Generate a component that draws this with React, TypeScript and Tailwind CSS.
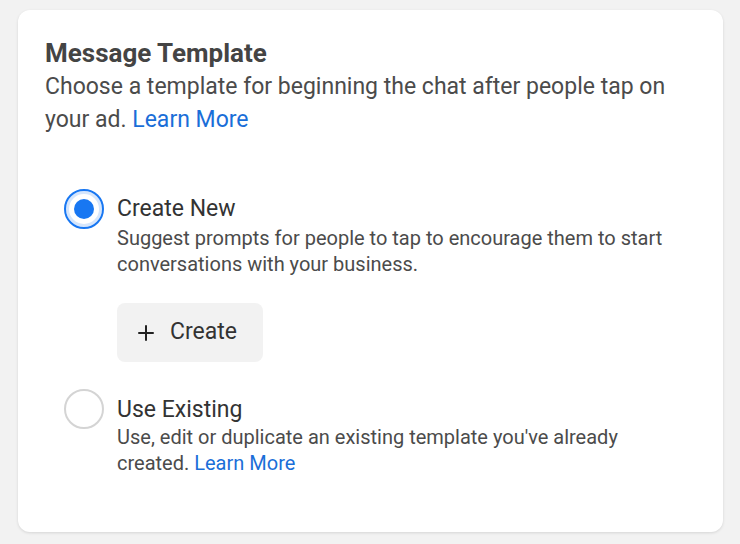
import { Plus } from 'lucide-react';

const Radio = ({ checked }: { checked: boolean }) =>
  checked ? (
    <div className="w-10 h-10 shrink-0 rounded-full border-2 border-[#1877f2] flex items-center justify-center shadow-[inset_0_0_0_3px_#d6e6fc]">
      <div className="w-5 h-5 rounded-full bg-[#1877f2]" />
    </div>
  ) : (
    <div className="w-10 h-10 shrink-0 rounded-full border-2 border-[#d4d4d4] bg-white" />
  );

const App = () => {
  return (
    <div className="w-[740px] h-[544px] bg-[#f2f2f2] pt-[10px] pl-[18px] font-['Roboto',sans-serif]">
      <div className="w-[705px] h-[522px] bg-white rounded-[12px] shadow-[0_1px_3px_rgba(0,0,0,0.12)] pl-[27px] pr-6 pt-[27px]">
        {/* Header */}
        <h1 className="text-[26px] leading-[32px] font-bold text-[#444444]">Message Template</h1>
        <p className="mt-[1px] text-[23px] leading-[33px] text-[#4b4b4b]">
          Choose a template for beginning the chat after people tap on your ad.{' '}
          <span className="text-[#1a6ed8]">Learn More</span>
        </p>

        {/* Options */}
        <div className="mt-[53px] pl-[19px] space-y-[27px]">
          <div className="flex items-start gap-[13px]">
            <Radio checked />
            <div className="pt-[6px]">
              <div className="text-[23px] leading-[28px] text-[#333333]">Create New</div>
              <p className="mt-[2px] text-[20px] leading-[26px] text-[#4b4b4b] w-[560px]">
                Suggest prompts for people to tap to encourage them to start conversations with your business.
              </p>
              <button className="mt-[26px] h-[59px] w-[146px] rounded-[8px] bg-[#f2f2f2] flex items-center pl-[17px] gap-[12px] text-[23px] text-[#333333]">
                <Plus className="w-6 h-6 text-[#222222]" strokeWidth={2} />
                Create
              </button>
            </div>
          </div>

          <div className="flex items-start gap-[13px]">
            <Radio checked={false} />
            <div className="pt-[7px]">
              <div className="text-[23px] leading-[28px] text-[#333333]">Use Existing</div>
              <p className="text-[20px] leading-[26px] text-[#4b4b4b] w-[560px]">
                Use, edit or duplicate an existing template you've already created.{' '}
                <span className="text-[#1a6ed8]">Learn More</span>
              </p>
            </div>
          </div>
        </div>
      </div>
    </div>
  );
};

export default App;
